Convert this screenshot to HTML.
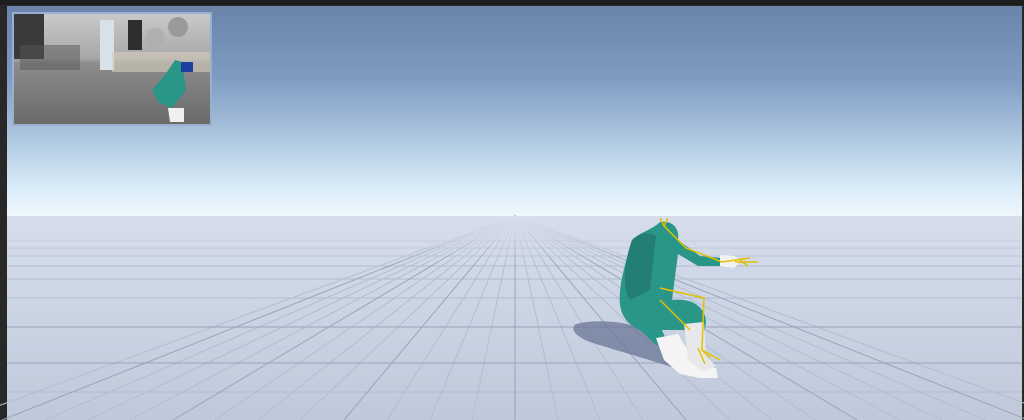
<!DOCTYPE html>
<html><head><meta charset="utf-8"><style>
html,body{margin:0;padding:0;width:1024px;height:420px;overflow:hidden;background:#222;}
svg{display:block}
</style></head><body>
<svg width="1024" height="420" viewBox="0 0 1024 420" xmlns="http://www.w3.org/2000/svg">
<defs>
<linearGradient id="sky" x1="0" y1="0" x2="0" y2="1">
<stop offset="0" stop-color="#6a84aa"/>
<stop offset="0.35" stop-color="#7f9cc2"/>
<stop offset="0.65" stop-color="#b2cbe3"/>
<stop offset="0.88" stop-color="#dcedf9"/>
<stop offset="1" stop-color="#eef7fd"/>
</linearGradient>
<linearGradient id="gnd" x1="0" y1="0" x2="0" y2="1">
<stop offset="0" stop-color="#d6deec"/>
<stop offset="1" stop-color="#bfc9d9"/>
</linearGradient>
<linearGradient id="fog" x1="0" y1="0" x2="0" y2="1">
<stop offset="0" stop-color="#d6deec" stop-opacity="1"/>
<stop offset="0.3" stop-color="#d4dcea" stop-opacity="0.85"/>
<stop offset="1" stop-color="#d0d8e7" stop-opacity="0"/>
</linearGradient>
<linearGradient id="room" x1="0" y1="0" x2="0" y2="1">
<stop offset="0" stop-color="#c9c9c9"/>
<stop offset="0.4" stop-color="#a8a8a8"/>
<stop offset="0.45" stop-color="#8c8c8c"/>
<stop offset="1" stop-color="#6a6a6a"/>
</linearGradient>
</defs>
<rect x="0" y="0" width="1024" height="420" fill="#282828"/>
<rect x="0" y="0" width="1024" height="5" fill="#1e1e1e"/>
<rect x="7" y="6" width="1015" height="210" fill="url(#sky)"/>
<rect x="7" y="216" width="1015" height="204" fill="url(#gnd)"/>
<g stroke="#b4bdce" stroke-width="1" fill="none">
<line x1="7" y1="392" x2="1022" y2="392"/>
<line x1="7" y1="298" x2="1022" y2="298"/>
<line x1="7" y1="279" x2="1022" y2="279"/>
<line x1="7" y1="266" x2="1022" y2="266"/>
<line x1="7" y1="256" x2="1022" y2="256"/>
<line x1="7" y1="248" x2="1022" y2="248"/>
<line x1="7" y1="241" x2="1022" y2="241"/>
<line x1="515" y1="216" x2="472" y2="420"/>
<line x1="515" y1="216" x2="558" y2="420"/>
<line x1="515" y1="216" x2="430" y2="420"/>
<line x1="515" y1="216" x2="600" y2="420"/>
<line x1="515" y1="216" x2="387" y2="420"/>
<line x1="515" y1="216" x2="643" y2="420"/>
<line x1="515" y1="216" x2="300" y2="420"/>
<line x1="515" y1="216" x2="730" y2="420"/>
<line x1="515" y1="216" x2="258" y2="420"/>
<line x1="515" y1="216" x2="772" y2="420"/>
<line x1="515" y1="216" x2="215" y2="420"/>
<line x1="515" y1="216" x2="815" y2="420"/>
<line x1="515" y1="216" x2="130" y2="420"/>
<line x1="515" y1="216" x2="900" y2="420"/>
<line x1="515" y1="216" x2="88" y2="420"/>
<line x1="515" y1="216" x2="942" y2="420"/>
<line x1="515" y1="216" x2="45" y2="420"/>
<line x1="515" y1="216" x2="985" y2="420"/>
<line x1="515" y1="216" x2="-40" y2="420"/>
<line x1="515" y1="216" x2="1070" y2="420"/>
</g>
<g stroke="#9aa4b8" stroke-width="1" fill="none">
<line x1="7" y1="327" x2="1022" y2="327"/>
<line x1="7" y1="363" x2="1022" y2="363"/>
<line x1="515" y1="216" x2="515" y2="420"/>
<line x1="515" y1="216" x2="344" y2="420"/>
<line x1="515" y1="216" x2="686" y2="420"/>
<line x1="515" y1="216" x2="173" y2="420"/>
<line x1="515" y1="216" x2="857" y2="420"/>
<line x1="515" y1="216" x2="2" y2="420"/>
<line x1="515" y1="216" x2="1028" y2="420"/>
</g>
<rect x="7" y="216" width="1015" height="50" fill="url(#fog)"/>
<!-- shadow -->
<path d="M576 324 C600 318 635 322 655 335 L690 362 L675 368 C650 360 615 350 590 342 C574 336 570 328 576 324Z" fill="#6a7596" opacity="0.75"/>
<!-- character -->
<path d="M660 222 C672 220 680 228 678 240 L700 256 L722 258 L722 266 L698 266 L678 254 L672 300 C690 298 705 305 706 322 L702 348 L688 348 L686 330 L662 330 L668 345 L656 345 L640 330 C630 326 622 318 620 305 C618 285 626 262 632 240 C640 232 652 230 660 222Z" fill="#2a9688"/>
<path d="M632 240 C640 232 650 232 656 236 L650 290 L630 300 C622 290 624 262 632 240Z" fill="#237f74"/>
<path d="M720 255 L735 256 L740 262 L734 268 L720 266Z" fill="#f2f2f2"/>
<path d="M656 338 L678 334 L690 354 L702 366 L716 368 L718 378 L700 378 L680 374 L664 360Z" fill="#f4f4f4"/>
<path d="M684 324 L704 322 L706 356 L716 366 L704 372 L688 360Z" fill="#e8e8ea"/>
<g stroke="#e2c200" stroke-width="1.5" fill="none">
<path d="M660 218 L664 226 L668 218 M664 226 L686 248 L722 262 L750 258 M735 262 L758 262 M740 260 L748 266"/>
<path d="M660 288 L704 298 L702 350 L710 358 M702 350 L720 360 M660 300 L690 330 M698 348 L705 364"/>
</g>
<!-- minimap -->
<rect x="12" y="12" width="200" height="114" fill="#9ab0d0"/>
<rect x="14" y="14" width="196" height="110" fill="url(#room)"/>
<rect x="14" y="14" width="30" height="45" fill="#3a3a3a"/>
<rect x="100" y="20" width="14" height="50" fill="#d8e0e8"/>
<rect x="128" y="20" width="14" height="30" fill="#2e2e2e"/>
<circle cx="178" cy="27" r="10" fill="#9a9a9a"/>
<circle cx="155" cy="38" r="10" fill="#b0b0b0"/>
<rect x="112" y="52" width="98" height="20" fill="#d6cfbe" opacity="0.6"/>
<rect x="20" y="45" width="60" height="25" fill="#555" opacity="0.5"/>
<path d="M175 60 L182 62 L186 90 L172 108 L158 102 L152 90 L165 75Z" fill="#2a9688"/>
<rect x="181" y="62" width="12" height="10" fill="#2040a0"/>
<path d="M168 108 L184 108 L184 122 L170 122Z" fill="#f0f0f0"/>
</svg>
</body></html>
